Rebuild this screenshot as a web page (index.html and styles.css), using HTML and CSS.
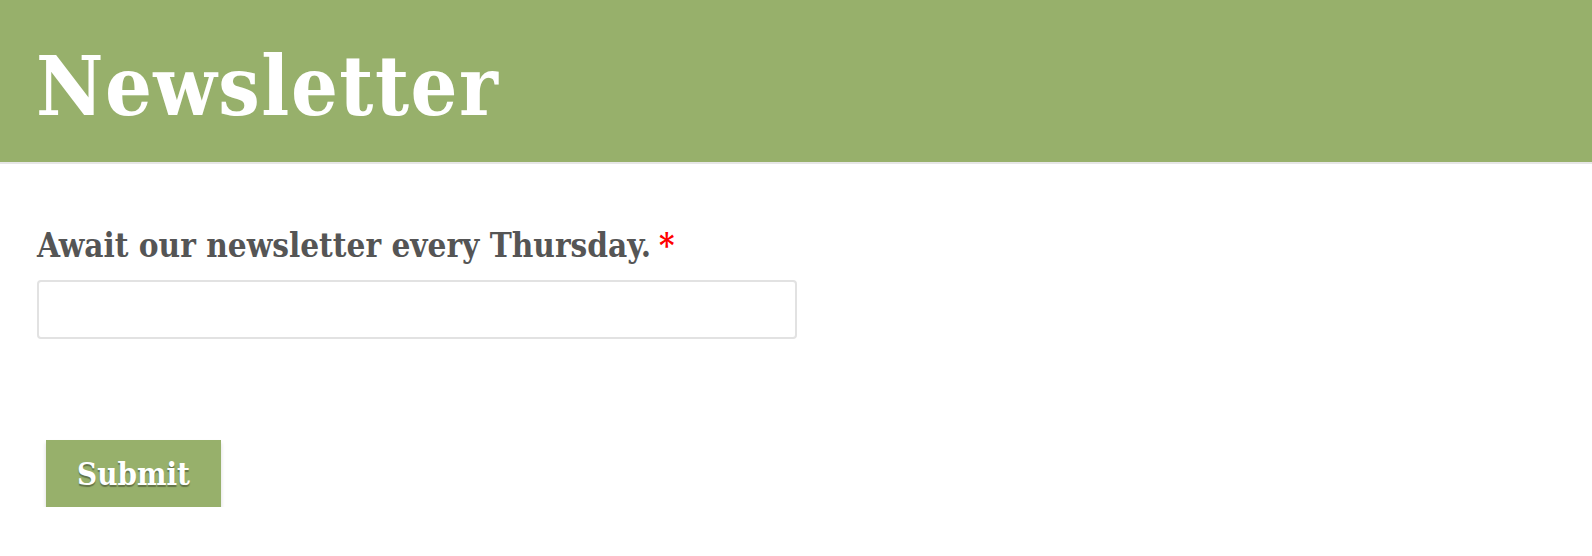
FILE: index.html
```html
<!DOCTYPE html>
<html lang="en">
<head>
    <meta charset="UTF-8">
    <title>Newsletter</title>
    <link rel="stylesheet" href="styles.css">
</head>
<body>
    <header class="page-header">
        <h1 class="page-title">Newsletter</h1>
    </header>

    <form class="signup-form">
        <label class="field-label" for="email">Await our newsletter every Thursday.<span class="required">*</span></label>
        <input class="field-input" type="text" id="email">

        <div class="form-actions">
            <button class="submit-button" type="button">Submit</button>
        </div>
    </form>
</body>
</html>
```

FILE: styles.css
```css
* {
    box-sizing: border-box;
    font-family: 'DejaVu Serif Condensed', 'DejaVu Serif', serif;
}

body {
    margin: 0;
    background-color: #fff;
}

.page-header {
    height: 164px;
    padding: 10px 36px 0;
    background-color: #97b06b;
    border-bottom: 2px solid #e6e6e6;
    display: flex;
    align-items: center;
}

.page-title {
    margin: 0;
    font-size: 82px;
    font-weight: bold;
    color: #fff;
    letter-spacing: 1.5px;
}

.signup-form {
    padding: 62px 37px 0;
}

.field-label {
    display: block;
    font-size: 33px;
    font-weight: bold;
    color: #555;
    line-height: 40px;
}

.required {
    margin-left: 8px;
    color: #f00;
}

.field-input {
    display: block;
    width: 760px;
    height: 59px;
    margin-top: 14px;
    border: 2px solid #e2e2e2;
    border-radius: 4px;
    background-color: #fff;
}

.form-actions {
    padding: 101px 0 0 9px;
}

.submit-button {
    width: 175px;
    height: 67px;
    padding: 0;
    border: none;
    background-color: #97b06b;
    color: #fff;
    font-size: 31px;
    font-weight: bold;
    text-shadow: 0 2px 1px rgba(0,0,0,0.35);
    box-shadow: 0 3px 4px rgba(0,0,0,0.15);
    cursor: pointer;
}
```
